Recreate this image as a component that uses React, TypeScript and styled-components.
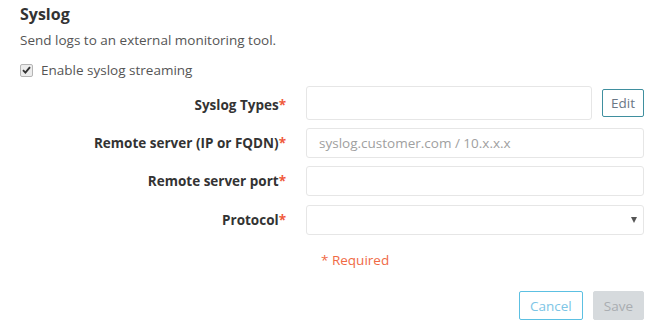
import React from "react";
import styled, { createGlobalStyle } from "styled-components";

const Global = createGlobalStyle`
  html, body { margin: 0; padding: 0; background: #fff; }
  body { font-family: "Open Sans", "Liberation Sans", sans-serif; color: #333; }
  * { box-sizing: border-box; }
`;

const Page = styled.div`
  width: 657px;
  height: 327px;
  padding: 3px 13px 0 20px;
  overflow: hidden;
`;

const Title = styled.h2`
  margin: 0;
  font-size: 16px;
  line-height: 22px;
  font-weight: 700;
  color: #333;
`;

const Desc = styled.p`
  margin: 5px 0 0;
  font-size: 13.5px;
  line-height: 20px;
  color: #555;
`;

const CheckRow = styled.label`
  display: flex;
  align-items: center;
  gap: 8px;
  margin-top: 10px;
  font-size: 13.5px;
  line-height: 20px;
  color: #555;
`;

const CheckBox = styled.span`
  width: 13px;
  height: 13px;
  border: 1px solid #b5b5b5;
  border-radius: 2px;
  background: #ececec;
  display: flex;
  align-items: center;
  justify-content: center;
`;

const Form = styled.div`
  display: flex;
  flex-direction: column;
  gap: 8px;
  margin-top: 6px;
`;

const Row = styled.div<{ $gap?: number }>`
  display: grid;
  grid-template-columns: 266px 1fr;
  column-gap: 20px;
  align-items: center;
  margin-top: ${(p) => p.$gap ?? 0}px;
`;

const Label = styled.div<{ $shift?: number }>`
  text-align: right;
  font-size: 13.5px;
  font-weight: 700;
  color: #333;
  line-height: 20px;
  padding-top: ${(p) => (p.$shift ?? 0) * 2}px;
`;

const Star = styled.span`
  color: #f05a3c;
`;

const Field = styled.div`
  display: flex;
  align-items: center;
  gap: 10px;
`;

const Input = styled.input<{ $h?: number }>`
  flex: 1;
  min-width: 0;
  height: ${(p) => p.$h ?? 30}px;
  border: 1px solid #e6e6e6;
  border-radius: 3px;
  padding: 0 12px;
  font-family: inherit;
  font-size: 13.5px;
  color: #333;
  outline: none;
  &::placeholder { color: #a0a0a0; }
`;

const SelectBox = styled.div`
  flex: 1;
  height: 30px;
  border: 1px solid #e6e6e6;
  border-radius: 3px;
  display: flex;
  align-items: center;
  justify-content: flex-end;
  padding-right: 6px;
`;

const Arrow = styled.span`
  width: 0;
  height: 0;
  border-left: 3.5px solid transparent;
  border-right: 3.5px solid transparent;
  border-top: 6px solid #555;
`;

const Button = styled.button<{ $variant: "edit" | "cancel" | "save" }>`
  height: ${(p) => (p.$variant === "edit" ? 28 : 29)}px;
  padding: 0 ${(p) => (p.$variant === "edit" ? 8 : 10)}px;
  font-family: inherit;
  font-size: 13.5px;
  border-radius: 2px;
  background: ${(p) => (p.$variant === "save" ? "#d6dadd" : "#fff")};
  border: 1px solid
    ${(p) =>
      p.$variant === "edit" ? "#3f8f9f" : p.$variant === "cancel" ? "#5cc0e2" : "#d6dadd"};
  color: ${(p) =>
    p.$variant === "edit" ? "#6b7785" : p.$variant === "cancel" ? "#7cc5e6" : "#a9adb1"};
  cursor: pointer;
`;

const Required = styled.div`
  margin-top: 15px;
  padding-left: 301px;
  font-size: 13.5px;
  line-height: 20px;
  color: #f06a45;
`;

const Actions = styled.div`
  display: flex;
  justify-content: flex-end;
  gap: 10px;
  margin-top: 21px;
`;

export default function App() {
  return (
    <>
      <Global />
      <Page>
        <Title>Syslog</Title>
        <Desc>Send logs to an external monitoring tool.</Desc>
        <CheckRow>
          <CheckBox>
            <svg width="9" height="8" viewBox="0 0 9 8">
              <path d="M1 4.2 L3.4 6.6 L8 1.2" fill="none" stroke="#333" strokeWidth="1.9" />
            </svg>
          </CheckBox>
          Enable syslog streaming
        </CheckRow>
        <Form>
          <Row>
            <Label $shift={1.5}>
              Syslog Types<Star>*</Star>
            </Label>
            <Field>
              <Input $h={34} />
              <Button $variant="edit">Edit</Button>
            </Field>
          </Row>
          <Row>
            <Label>
              Remote server (IP or FQDN)<Star>*</Star>
            </Label>
            <Field>
              <Input placeholder="syslog.customer.com / 10.x.x.x" />
            </Field>
          </Row>
          <Row>
            <Label>
              Remote server port<Star>*</Star>
            </Label>
            <Field>
              <Input />
            </Field>
          </Row>
          <Row $gap={1}>
            <Label>
              Protocol<Star>*</Star>
            </Label>
            <Field>
              <SelectBox>
                <Arrow />
              </SelectBox>
            </Field>
          </Row>
        </Form>
        <Required>* Required</Required>
        <Actions>
          <Button $variant="cancel">Cancel</Button>
          <Button $variant="save">Save</Button>
        </Actions>
      </Page>
    </>
  );
}
